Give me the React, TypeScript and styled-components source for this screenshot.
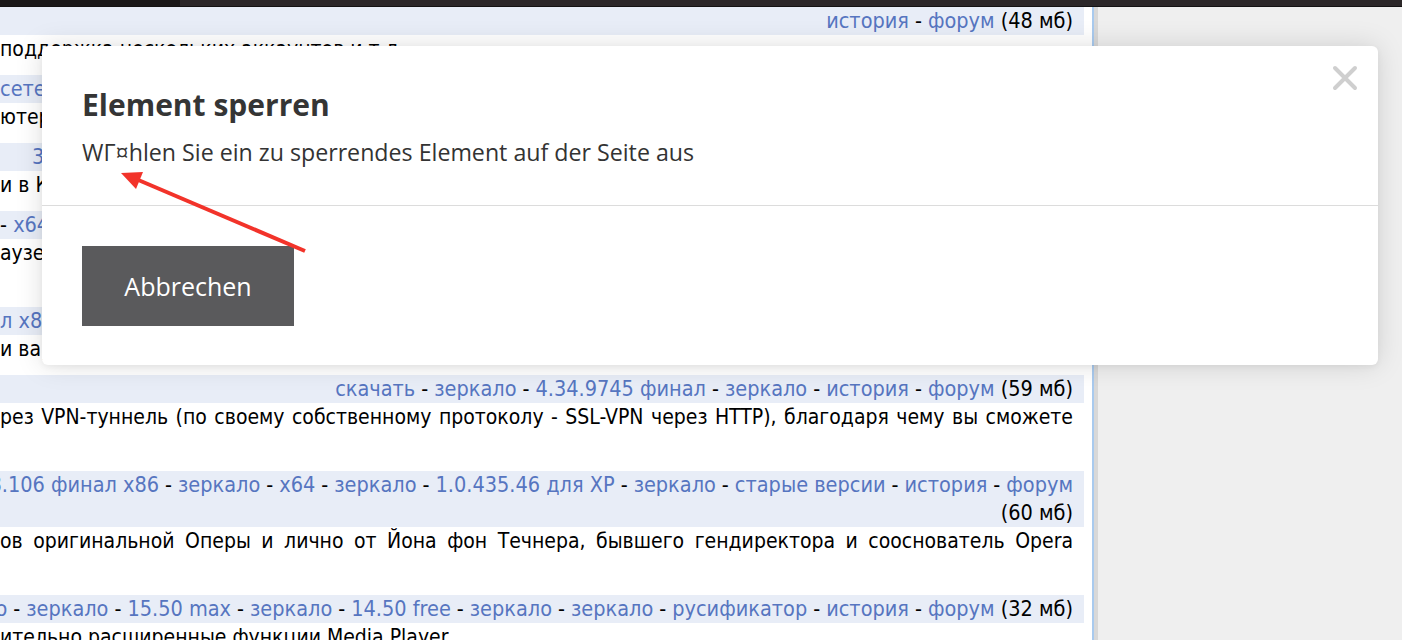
import React from "react";
import styled, { createGlobalStyle } from "styled-components";

const Global = createGlobalStyle`
  html, body { margin: 0; padding: 0; background: #efefef; overflow: hidden; }
  body { width: 1402px; height: 640px; }
`;

const Shell = styled.div`
  position: relative;
  width: 1402px;
  height: 640px;
  display: flex;
  flex-direction: column;
  overflow: hidden;
`;

const TopBar = styled.div`
  height: 7px;
  display: flex;
  flex-shrink: 0;
`;

const TopSeg = styled.div<{ $dark?: boolean }>`
  background: ${(p) => (p.$dark ? "#1b1819" : "#2c2729")};
  width: ${(p) => (p.$dark ? "180px" : "auto")};
  flex: ${(p) => (p.$dark ? "0 0 auto" : "1")};
  border-bottom: 1px solid #141213;
`;

const Main = styled.div`
  flex: 1;
  display: flex;
  min-height: 0;
`;

const Content = styled.div`
  width: 1084px;
  padding-right: 8px;
  background: #fff;
  border-right: 2px solid #a9caee;
  font-family: "DejaVu Sans Condensed", "Liberation Sans", Arial, sans-serif;
  font-stretch: condensed;
  font-size: 21.5px;
  line-height: 28px;
  color: #000;
  overflow: hidden;
`;

const Side = styled.div`
  flex: 1;
  background: #efefef;
  border-left: 4px solid #d8d8d8;
`;

const Item = styled.div`
  margin-bottom: 12px;
`;

const Band = styled.div`
  background: #e8edf7;
  padding-right: 11px;
`;

const BandLine = styled.div<{ $left?: boolean; $lead?: number }>`
  display: flex;
  justify-content: ${(p) => (p.$left ? "flex-start" : "flex-end")};
  padding-left: ${(p) => p.$lead ?? 0}px;
  white-space: nowrap;
  overflow: hidden;
  height: 28px;
`;

const Link = styled.span`
  color: #5675c0;
`;

const Dash = styled.span`
  color: #000;
  padding: 0 6px;
`;

const Size = styled.span`
  padding-left: 6px;
`;

const Desc = styled.div<{ $justify?: boolean; $lines?: number }>`
  min-height: ${(p) => (p.$lines ?? 1) * 28}px;
  font-size: 21px;
  text-align: ${(p) => (p.$justify ? "justify" : "left")};
  text-align-last: ${(p) => (p.$justify ? "justify" : "auto")};
  padding-right: 11px;
  white-space: ${(p) => (p.$justify ? "normal" : "nowrap")};
  overflow: hidden;
`;

const Overlay = styled.div`
  position: absolute;
  left: 42px;
  top: 46px;
  width: 1336px;
  height: 319px;
  background: #fff;
  border-radius: 6px;
  box-shadow: 0 0 28px rgba(0, 0, 0, 0.13), 0 2px 6px rgba(0, 0, 0, 0.05);
  display: flex;
  flex-direction: column;
  font-family: "Open Sans", "Noto Sans", sans-serif;
  color: #333;
`;

const Header = styled.div`
  padding: 40px 40px 39px;
  border-bottom: 1px solid #dcdcdc;
`;

const Title = styled.h2`
  margin: 0;
  font-size: 30px;
  line-height: 38px;
  font-weight: 700;
  color: #353535;
`;

const Subtitle = styled.p`
  margin: 14px 0 0;
  font-size: 23.2px;
  line-height: 28px;
  color: #333;
`;

const Footer = styled.div`
  padding: 40px 40px 39px;
  display: flex;
`;

const CancelButton = styled.button`
  width: 212px;
  height: 80px;
  border: none;
  border-radius: 0;
  background: #5a5a5c;
  color: #fff;
  font-family: "Open Sans", "Noto Sans", sans-serif;
  font-size: 25px;
  padding: 0;
  cursor: pointer;
`;

const Close = styled.button`
  position: absolute;
  right: 20px;
  top: 19px;
  width: 26px;
  height: 26px;
  padding: 0;
  border: none;
  background: transparent;
  cursor: pointer;
`;

const ArrowSvg = styled.svg`
  position: absolute;
  left: 110px;
  top: 160px;
  overflow: visible;
`;

const LinkRow: React.FC<{ links: string[]; size?: string }> = ({ links, size }) => (
  <>
    {links.map((l, i) => (
      <React.Fragment key={i}>
        {i > 0 && <Dash>-</Dash>}
        <Link>{l}</Link>
      </React.Fragment>
    ))}
    {size && <Size>{size}</Size>}
  </>
);

export default function App() {
  return (
    <>
      <Global />
      <Shell>
        <TopBar>
          <TopSeg $dark />
          <TopSeg />
        </TopBar>
        <Main>
          <Content>
            <Item>
              <Band>
                <BandLine>
                  <LinkRow links={["история", "форум"]} size="(48 мб)" />
                </BandLine>
              </Band>
              <Desc>поддержка нескольких аккаунтов и т.д.</Desc>
            </Item>
            <Item>
              <Band>
                <BandLine $left>
                  <LinkRow links={["сетевой клиент", "зеркало", "история", "форум"]} />
                </BandLine>
              </Band>
              <Desc>ютер пользователя</Desc>
            </Item>
            <Item>
              <Band>
                <BandLine $left $lead={32}>
                  <LinkRow links={["3.2 финал", "зеркало", "история", "форум"]} />
                </BandLine>
              </Band>
              <Desc>и в Контакте</Desc>
            </Item>
            <Item>
              <Band>
                <BandLine $left>
                  <span>-&nbsp;</span>
                  <LinkRow links={["x64", "зеркало", "история", "форум"]} />
                </BandLine>
              </Band>
              <Desc $lines={2}>аузера</Desc>
            </Item>
            <Item>
              <Band>
                <BandLine $left>
                  <LinkRow links={["л x86", "зеркало", "история", "форум"]} />
                </BandLine>
              </Band>
              <Desc>и вариантов</Desc>
            </Item>
            <Item>
              <Band>
                <BandLine>
                  <LinkRow
                    links={["скачать", "зеркало", "4.34.9745 финал", "зеркало", "история", "форум"]}
                    size="(59 мб)"
                  />
                </BandLine>
              </Band>
              <Desc $justify $lines={2}>
                рез VPN-туннель (по своему собственному протоколу - SSL-VPN через HTTP), благодаря чему вы сможете
              </Desc>
            </Item>
            <Item>
              <Band>
                <BandLine>
                  <LinkRow
                    links={[
                      "1.14.1077.60 - 1.15.1147.36 - 1.13.1008.106 финал x86",
                      "зеркало",
                      "x64",
                      "зеркало",
                      "1.0.435.46 для XP",
                      "зеркало",
                      "старые версии",
                      "история",
                      "форум",
                    ]}
                  />
                </BandLine>
                <BandLine>(60 мб)</BandLine>
              </Band>
              <Desc $justify $lines={2}>
                ов оригинальной Оперы и лично от Йона фон Течнера, бывшего гендиректора и сооснователь Opera
              </Desc>
            </Item>
            <Item>
              <Band>
                <BandLine>
                  <LinkRow
                    links={[
                      "скачать - 16.0 pro",
                      "зеркало",
                      "15.50 max",
                      "зеркало",
                      "14.50 free",
                      "зеркало",
                      "зеркало",
                      "русификатор",
                      "история",
                      "форум",
                    ]}
                    size="(32 мб)"
                  />
                </BandLine>
              </Band>
              <Desc>ительно расширенные функции Media Player</Desc>
            </Item>
          </Content>
          <Side />
        </Main>

        <Overlay>
          <Header>
            <Title>Element sperren</Title>
            <Subtitle>WГ¤hlen Sie ein zu sperrendes Element auf der Seite aus</Subtitle>
          </Header>
          <Footer>
            <CancelButton>Abbrechen</CancelButton>
          </Footer>
          <Close aria-label="close">
            <svg width="26" height="26" viewBox="0 0 26 26">
              <path d="M3 3 L23 23 M23 3 L3 23" stroke="#cfcfcf" strokeWidth="4" strokeLinecap="round" />
            </svg>
          </Close>
        </Overlay>

        <ArrowSvg width="210" height="100" viewBox="0 0 210 100">
          <line x1="195" y1="91" x2="26" y2="19" stroke="#f2332a" strokeWidth="4" />
          <polygon points="11,13 26,29 33,12" fill="#f2332a" />
        </ArrowSvg>
      </Shell>
    </>
  );
}
